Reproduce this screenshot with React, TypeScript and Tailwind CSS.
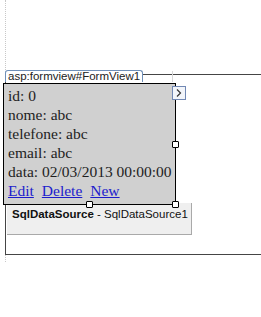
import React from 'react';

const sans = "font-['Liberation_Sans',Arial,sans-serif]";
const serif = "font-['Liberation_Serif','Times_New_Roman',serif]";

const Handle = ({ className }: { className: string }) => (
  <div className={`absolute w-[7px] h-[7px] bg-white border border-black rounded-[1px] ${className}`} />
);

const fields = [
  ['id', '0'],
  ['nome', 'abc'],
  ['telefone', 'abc'],
  ['email', 'abc'],
  ['data', '02/03/2013 00:00:00'],
];

export default function App() {
  return (
    <div className="relative w-[261px] h-[317px] bg-white overflow-hidden">
      {/* page margin guide */}
      <div className="absolute left-[5px] top-0 h-[262px] border-l border-dotted border-[#c8c8c8]" />

      {/* heading, scrolled mostly out of view */}
      <div className="h-[3px]">
        <div className={`${serif} font-bold text-[32px] leading-[32px] pl-[8px] whitespace-nowrap text-black -translate-y-[27px]`}>
          Cadastro de Contatos
        </div>
      </div>

      <div className="relative ml-[5px] mt-[71px] h-[181px] border-t border-l border-b border-[#454545]">
        {/* control tag */}
        <div
          className={`absolute left-[-1px] top-[-5px] h-[12px] px-[2px] bg-white border border-b-0 border-[#6f8fb8] rounded-t-[3px] ${sans} text-[11.5px] leading-[11px] text-[#222] whitespace-nowrap`}
        >
          asp:formview#FormView1
        </div>
        <div className="absolute left-[166px] top-[-4px] h-[11px] border-l border-[#d8d8d8]" />

        {/* form view */}
        <div className="relative -ml-[3px] mt-[8px] w-[173px] h-[122px] bg-[#d0d0d0] border border-black">
          <div className={`flex flex-col ${serif} text-[15.5px] leading-[19px] text-[#1e1e1e] pl-[4px] pt-[2px]`}>
            {fields.map(([k, v]) => (
              <div key={k} className="whitespace-nowrap">
                {k}: {v}
              </div>
            ))}
            <div className="flex gap-[8px] text-[#1c1ccc] underline">
              <span>Edit</span>
              <span>Delete</span>
              <span>New</span>
            </div>
          </div>

          {/* smart tag */}
          <div className="absolute left-[168px] top-[2px] w-[14px] h-[14px] bg-[#f2f5fa] border border-[#7188b4] flex items-center justify-center">
            <svg width="6" height="8" viewBox="0 0 6 8" fill="none">
              <path d="M1 0.5 L4.5 4 L1 7.5" stroke="#333" strokeWidth="1.2" />
            </svg>
          </div>

          <Handle className="right-[-4px] top-[57px]" />
          <Handle className="left-[82px] bottom-[-4px]" />
          <Handle className="right-[-4px] bottom-[-4px]" />
        </div>

        {/* data source */}
        <div
          className={`flex items-start ml-[1px] -mt-[2px] w-[185px] h-[32px] bg-[#efefef] border-r border-b border-[#a9a9a9] ${sans} text-[11.5px] leading-[13px] text-[#111] pl-[5px] pt-[5px] whitespace-pre`}
        >
          <span className="font-bold">SqlDataSource</span>
          <span> - SqlDataSource1</span>
        </div>
      </div>
    </div>
  );
}
